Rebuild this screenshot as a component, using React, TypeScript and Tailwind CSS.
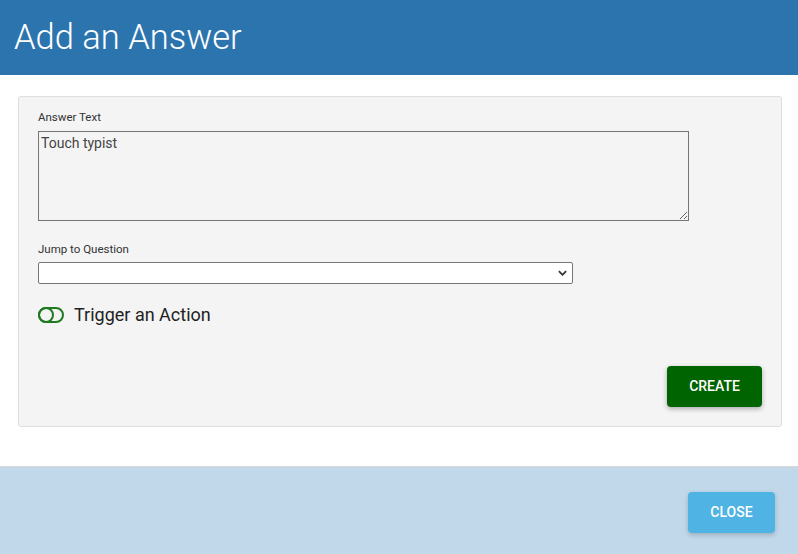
const App = () => {
  return (
    <div className="w-[798px] h-[554px] flex flex-col bg-white font-['Roboto',sans-serif] overflow-hidden">
      <header className="h-[75px] bg-[#2c74ae] flex items-center px-[14px] shrink-0">
        <h1 className="text-[34.5px] font-light text-white leading-none">Add an Answer</h1>
      </header>

      <main className="flex-1 pl-[18px] pr-[16px] pt-[21px]">
        <section className="h-[331px] bg-[#f4f4f4] border border-[#dedede] rounded-[3px] px-[19px] pt-[13px] flex flex-col">
          <label className="text-[11.5px] text-[#333] leading-[15px]">Answer Text</label>
          <textarea
            defaultValue="Touch typist"
            className="mt-[6px] w-[651px] h-[90px] bg-[#f4f4f4] border border-[#767676] px-[2px] py-[2px] text-[14px] text-[#444] leading-[18px] outline-none resize-y font-['Roboto',sans-serif]"
          />
          <label className="mt-[21px] text-[11.5px] text-[#333] leading-[15px]">Jump to Question</label>
          <div className="mt-[5px] w-[535px] h-[22px] bg-white border border-[#767676] rounded-[2px] flex items-center justify-end pr-[5px]">
            <svg viewBox="0 0 10 6" className="w-[9px] h-[6px]">
              <path d="M1 1l4 4 4-4" fill="none" stroke="#333" strokeWidth="2" />
            </svg>
          </div>
          <div className="mt-[17px] flex items-center gap-[10px]">
            <div className="relative w-[26px] h-[16px] rounded-full border-2 border-[#1f7a1f]">
              <div className="absolute left-[-2px] top-[-2px] w-[16px] h-[16px] rounded-full border-2 border-[#1f7a1f]" />
            </div>
            <span className="text-[18px] text-[#222]">Trigger an Action</span>
          </div>
          <div className="flex-1 flex items-end justify-end pb-[19px]">
            <button className="w-[95px] h-[41px] bg-[#006400] rounded-[4px] text-white text-[14px] font-medium shadow-[0_2px_5px_rgba(0,0,0,0.3)]">
              CREATE
            </button>
          </div>
        </section>
      </main>

      <footer className="h-[88px] bg-[#c1d8eb] border-t border-[#d8d8d8] flex items-start justify-end pt-[25px] pr-[23px] shrink-0">
        <button className="w-[87px] h-[41px] bg-[#4fb3e3] rounded-[4px] text-white text-[14px] font-medium shadow-[0_2px_5px_rgba(0,0,0,0.2)]">
          CLOSE
        </button>
      </footer>
    </div>
  )
}

export default App
